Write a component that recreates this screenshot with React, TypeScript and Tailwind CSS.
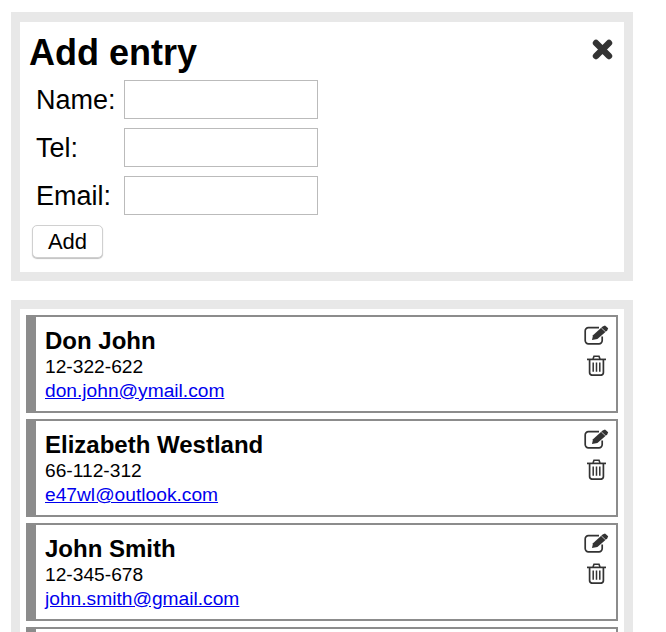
const entries = [
  { name: "Don John", tel: "12-322-622", email: "don.john@ymail.com" },
  { name: "Elizabeth Westland", tel: "66-112-312", email: "e47wl@outlook.com" },
  { name: "John Smith", tel: "12-345-678", email: "john.smith@gmail.com" },
];

function CloseIcon() {
  return (
    <svg width="21" height="21" viewBox="0 0 21 21" className="mt-[17px] shrink-0" fill="none">
      <path d="M4 4 L17 17 M17 4 L4 17" stroke="#333333" strokeWidth="6.4" strokeLinecap="round" />
    </svg>
  );
}

function EditIcon() {
  return (
    <svg width="25" height="20" viewBox="0 0 25 20" className="shrink-0" fill="none">
      <path d="M15 2.6 H4.4 A3.2 3.2 0 0 0 1.2 5.8 V15.6 A3.2 3.2 0 0 0 4.4 18.8 H15 A3.2 3.2 0 0 0 18.2 15.6 V11.5" stroke="#333333" strokeWidth="1.7" />
      <path d="M8 15 L9 10.2 L18.6 1.6 L21 0.5 L24.2 3.2 L23.2 5.6 L13.4 14 Z" fill="#333333" />
      <path d="M17.4 3 L21.8 7" stroke="#ffffff" strokeWidth="0.7" />
    </svg>
  );
}

function TrashIcon() {
  return (
    <svg width="19" height="21" viewBox="0 0 19 21" className="shrink-0" fill="none" stroke="#333333">
      <path d="M0 4.4 H19" strokeWidth="1.7" />
      <path d="M6 4 L7 1.2 H12 L13 4" strokeWidth="1.6" />
      <path d="M2.6 4.5 V17.6 A2.6 2.6 0 0 0 5.2 20.2 H13.8 A2.6 2.6 0 0 0 16.4 17.6 V4.5" strokeWidth="1.7" />
      <path d="M6.2 7.5 V16.8 M9.5 7.5 V16.8 M12.8 7.5 V16.8" strokeWidth="1.5" />
    </svg>
  );
}

function Field({ label }: { label: string }) {
  return (
    <label className="flex h-[39px] items-center">
      <span className="w-[92px] shrink-0 pl-[4px] pt-[2px] text-[27px] leading-none">{label}</span>
      <input className="h-[39px] w-[194px] border border-[#bbbbbb] bg-white" />
    </label>
  );
}

function Entry({ name, tel, email }: { name: string; tel: string; email: string }) {
  return (
    <div className="flex h-[98px] shrink-0 justify-between border-2 border-l-[10px] border-[#8c8c8c] pl-[9px] pr-[7px]">
      <div className="pt-[9px]">
        <div className="text-[24px] font-bold leading-[30px]">{name}</div>
        <div className="text-[19.2px] leading-[22px]">{tel}</div>
        <a href="#" className="block text-[19.2px] leading-[25px] text-[#0000ee] underline">{email}</a>
      </div>
      <div className="flex w-[27px] flex-col items-center pt-[8px]">
        <div className="ml-[1px]"><EditIcon /></div>
        <div className="ml-[2px] mt-[10px]"><TrashIcon /></div>
      </div>
    </div>
  );
}

export default function App() {
  return (
    <div className="h-[632px] overflow-hidden bg-white pl-[11px] pr-[33px] pt-[12px] font-['Liberation_Sans',Arial,sans-serif] text-black">
      <section className="h-[269px] border-[9px] border-t-[10px] border-[#e8e8e8] bg-white">
        <div className="flex items-start justify-between pl-[9px] pr-[11px]">
          <h1 className="mt-[10px] text-[36px] font-bold leading-[42px]">Add entry</h1>
          <CloseIcon />
        </div>
        <form className="mt-[6px] flex flex-col gap-[9px] pl-[12px]">
          <Field label="Name:" />
          <Field label="Tel:" />
          <Field label="Email:" />
          <button type="button" className="mt-[1px] h-[33px] w-[71px] rounded-[5px] border border-[#d0d0d0] bg-white text-[22px] leading-none text-black shadow-[0_1px_1px_rgba(0,0,0,0.25)]">
            Add
          </button>
        </form>
      </section>
      <section className="mt-[19px] flex h-[400px] flex-col gap-[6px] border-[9px] border-[#e8e8e8] bg-white px-[6px] pt-[6px]">
        {entries.map((e) => (
          <Entry key={e.name} {...e} />
        ))}
        <div className="h-[98px] shrink-0 border-2 border-l-[10px] border-[#8c8c8c]" />
      </section>
    </div>
  );
}
